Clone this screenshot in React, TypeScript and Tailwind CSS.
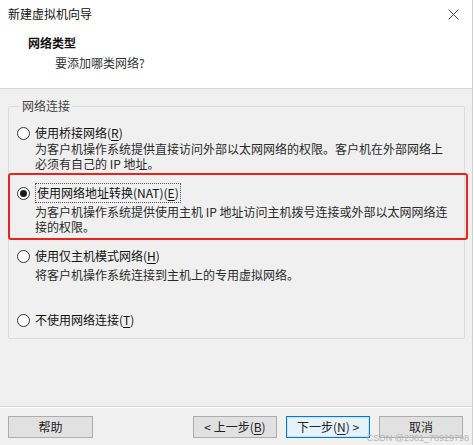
import type { ReactNode } from "react";

const font = { fontFamily: '"Noto Sans CJK SC", "Noto Sans", sans-serif' };

function Radio({ checked }: { checked?: boolean }) {
  return (
    <span className="flex h-[13px] w-[13px] shrink-0 items-center justify-center rounded-full border border-[#333333] bg-white">
      {checked ? <span className="h-[7px] w-[7px] rounded-full bg-[#1a1a1a]" /> : null}
    </span>
  );
}

function Key({ children }: { children: ReactNode }) {
  return <span className="underline underline-offset-2">{children}</span>;
}

interface OptionProps {
  label: ReactNode;
  checked?: boolean;
  lines?: string[];
  descGap?: string;
}

function Option({ label, checked, lines, descGap = "mt-0" }: OptionProps) {
  return (
    <div className="flex flex-col">
      <div className={`flex items-center gap-[5px] ${checked ? "h-[20px]" : "h-[16px]"}`}>
        <Radio checked={checked} />
        <span
          className={`text-[12px] leading-[16px] text-[#111] ${
            checked ? "border border-dotted border-[#555] px-[1px] py-[1px]" : ""
          }`}
        >
          {label}
        </span>
      </div>
      {lines ? (
        <div className={`${descGap} pl-[18px] text-[12px] leading-[15px] text-[#2a2a2a]`}>
          {lines.map((line) => (
            <div key={line} className="whitespace-pre">
              {line}
            </div>
          ))}
        </div>
      ) : null}
    </div>
  );
}

function Button({ children, primary }: { children: ReactNode; primary?: boolean }) {
  return (
    <button
      className={`flex h-[22px] w-[84px] items-center justify-center text-[12px] leading-none text-[#222] ${
        primary
          ? "border border-[#0078d7] bg-[#e5f1fb] shadow-[inset_0_0_0_1px_#cce4f7]"
          : "border border-[#adadad] bg-[#e1e1e1]"
      }`}
    >
      {children}
    </button>
  );
}

export default function App() {
  return (
    <div className="h-[445px] w-[474px] bg-white" style={font}>
      <div className="flex h-[445px] w-[473px] flex-col border-r border-[#cfcfcf] bg-[#f0f0f0]">
        <div className="flex h-[89px] flex-col border-b border-[#d8d8d8] bg-white">
          <div className="flex h-[28px] items-center justify-between pl-[8px] pr-[12px]">
            <span className="text-[12px] leading-[16px] text-[#111]">新建虚拟机向导</span>
            <svg width="11" height="11" viewBox="0 0 11 11" className="mr-[1px]">
              <path d="M0.5 0.5 L10.5 10.5 M10.5 0.5 L0.5 10.5" stroke="#444" strokeWidth="1" />
            </svg>
          </div>
          <div className="pl-[28px] pt-[7px] text-[12px] font-bold leading-[16px] text-[#111]">
            网络类型
          </div>
          <div className="mt-[4px] pl-[55px] text-[12px] leading-[16px] text-[#333]">
            要添加哪类网络?
          </div>
        </div>

        <div className="flex flex-1 flex-col px-[8px]">
          <fieldset className="mt-[9px] w-[457px] rounded-[2px] border border-[#dcdcdc] px-[8px] pb-[10px] pt-[11px]">
            <legend className="ml-[3px] px-[2px] text-[12px] leading-[16px] text-[#444]">
              网络连接
            </legend>
            <div className="flex flex-col">
              <Option
                label={
                  <>
                    使用桥接网络(<Key>R</Key>)
                  </>
                }
                lines={[
                  "为客户机操作系统提供直接访问外部以太网网络的权限。客户机在外部网络上",
                  "必须有自己的 IP 地址。",
                ]}
              />
              <div className="relative mt-[12px]">
                <div className="pointer-events-none absolute -bottom-[6px] -left-[9px] -right-[12px] -top-[10px] rounded-[3px] border-[2.5px] border-[#e8221c]" />
                <Option
                  checked
                  label={
                    <>
                      使用网络地址转换(NAT)(<Key>E</Key>)
                    </>
                  }
                  descGap="mt-[1px]"
                  lines={[
                    "为客户机操作系统提供使用主机 IP 地址访问主机拨号连接或外部以太网网络连",
                    "接的权限。",
                  ]}
                />
              </div>
              <div className="mt-[14px]">
                <Option
                  label={
                    <>
                      使用仅主机模式网络(<Key>H</Key>)
                    </>
                  }
                  descGap="mt-[3px]"
                  lines={["将客户机操作系统连接到主机上的专用虚拟网络。"]}
                />
              </div>
              <div className="mt-[30px]">
                <Option
                  label={
                    <>
                      不使用网络连接(<Key>T</Key>)
                    </>
                  }
                />
              </div>
            </div>
          </fieldset>
        </div>

        <div className="relative flex h-[39px] items-start justify-between border-t border-[#d5d5d5] pl-[8px] pr-[9px] pt-[9px] shadow-[inset_0_1px_0_#ffffff]">
          <button className="flex h-[22px] w-[85px] items-center justify-center border border-[#adadad] bg-[#e1e1e1] text-[12px] leading-none text-[#222]">
            帮助
          </button>
          <div className="flex gap-[9px]">
            <Button>
              &lt; 上一步(<Key>B</Key>)
            </Button>
            <Button primary>
              下一步(<Key>N</Key>) &gt;
            </Button>
            <Button>取消</Button>
          </div>
          <span
            className="pointer-events-none absolute bottom-[2px] right-[3px] text-[9px] leading-none text-[#b4b4b4]"
            style={{ fontFamily: '"Liberation Sans", sans-serif' }}
          >
            CSDN @2301_78929798
          </span>
        </div>
      </div>
    </div>
  );
}
